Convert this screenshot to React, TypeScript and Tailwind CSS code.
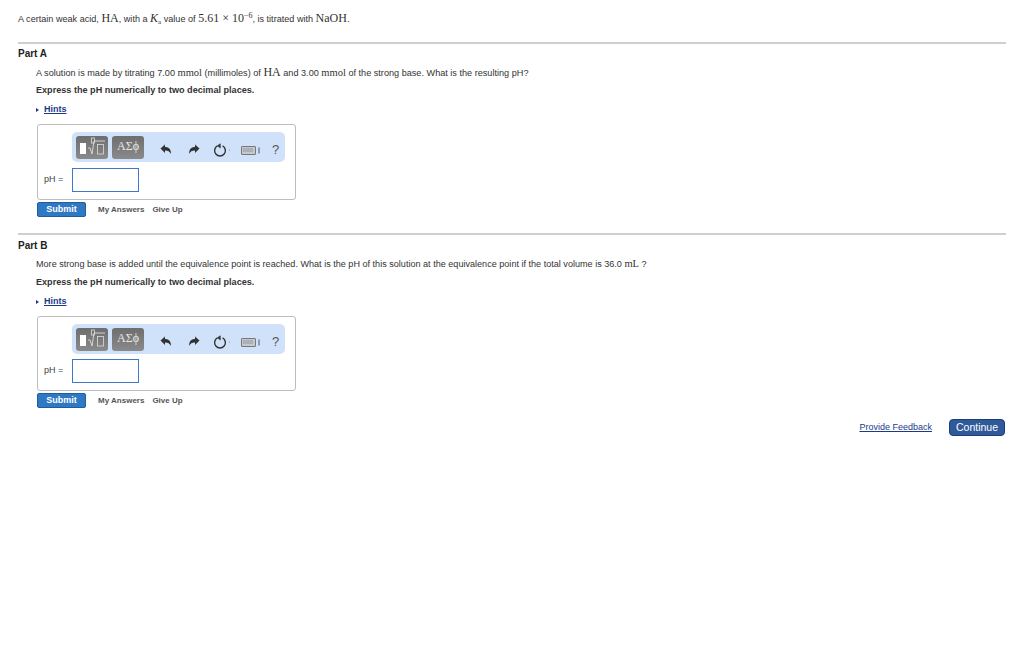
import React from "react";

const M = ({ children }: { children: React.ReactNode }) => (
  <span className="font-['Liberation_Serif',serif] text-[12px] text-[#333]">{children}</span>
);
const U = ({ children }: { children: React.ReactNode }) => (
  <span className="font-['Liberation_Serif',serif] text-[10.5px] text-[#333]">{children}</span>
);

function Toolbar() {
  return (
    <div className="ml-[34px] flex h-[30px] w-[213px] items-center rounded-[5px] bg-[#cfe2fa] pl-[4px]">
      <div className="flex h-[23px] w-[32px] items-center justify-center rounded-[3px] bg-gradient-to-b from-[#6e6e6e] to-[#8a8a8a]">
        <svg width="30" height="22" viewBox="0 0 30 22">
          <rect x="3" y="7" width="6" height="11" fill="#fff" />
          <rect x="14.5" y="2" width="3" height="5" fill="none" stroke="#ddd" strokeWidth="0.8" />
          <path d="M11 12l2 0 2 6 2-13 11 0" fill="none" stroke="#ddd" strokeWidth="0.9" />
          <rect x="20.5" y="8.5" width="6" height="9.5" fill="none" stroke="#ddd" strokeWidth="0.8" />
        </svg>
      </div>
      <div className="ml-[4px] flex h-[23px] w-[32px] items-center justify-center rounded-[3px] bg-gradient-to-b from-[#6e6e6e] to-[#8a8a8a] pb-[3px] font-['Liberation_Serif',serif] text-[12px] leading-none text-[#e8e8e8]">
        AΣϕ
      </div>
      <svg className="mt-[5px] ml-[16px]" width="12" height="11" viewBox="0 0 12 11">
        <path d="M0.5 4.5L5 0.5v2.6c4 0 6 2.6 6 7-1.2-2.6-3-3.6-6-3.6v2.5z" fill="#333" />
      </svg>
      <svg className="mt-[5px] ml-[16px]" width="12" height="11" viewBox="0 0 12 11">
        <path d="M11.5 4.5L7 0.5v2.6c-4 0-6 2.6-6 7 1.2-2.6 3-3.6 6-3.6v2.5z" fill="#333" />
      </svg>
      <svg className="mt-[5px] ml-[13px]" width="14" height="14" viewBox="0 0 14 14">
        <path d="M4.4 2.8A5.4 5.4 0 1 0 9.6 2.8" fill="none" stroke="#333" strokeWidth="1.4" />
        <path d="M7.6 0.2v5.2L4 2.8z" fill="#333" />
      </svg>
      <div className="mt-[5px] ml-[2px] h-[2px] w-px bg-[#aebccc]" />
      <svg className="mt-[7px] ml-[11px]" width="19" height="9" viewBox="0 0 19 9">
        <rect x="0.5" y="0.5" width="14" height="8" rx="0.5" fill="#c4c8d0" stroke="#777" />
        <path d="M2.5 3h10M2.5 5h10" stroke="#666" strokeWidth="1" strokeDasharray="1 1" />
        <path d="M18 1.5v6" stroke="#555" strokeWidth="1" />
      </svg>
      <span className="mt-[4px] ml-[12px] font-['Liberation_Sans',sans-serif] text-[13px] leading-none text-[#555]">?</span>
    </div>
  );
}

function Answer({ boxH, inputGap }: { boxH: string; inputGap: string }) {
  return (
    <>
      <div className={`mt-[9px] ml-[19px] ${boxH} w-[259px] rounded-[3px] border border-[#bdbdbd] pt-[7px]`}>
        <Toolbar />
        <div className={`${inputGap} flex items-center`}>
          <span className="ml-[6px] w-[28px] pb-[2px] text-[9px] text-[#444]">pH =</span>
          <div className="h-[24px] w-[67px] border border-[#3f78c9] bg-white" />
        </div>
      </div>
      <div className="mt-[2px] ml-[19px] flex items-center">
        <div className="flex h-[15px] w-[49px] items-center justify-center rounded-[2px] border border-[#1f5d9e] bg-[#2f78c4] text-[9px] font-bold text-white">
          Submit
        </div>
        <span className="ml-[12px] text-[8px] font-bold text-[#555]">My Answers</span>
        <span className="ml-[8px] text-[8px] font-bold text-[#555]">Give Up</span>
      </div>
    </>
  );
}

function Hints() {
  return (
    <div className="mt-[7px] ml-[18px] flex h-[11px] items-center">
      <span className="mr-[5px] h-0 w-0 border-y-[2.5px] border-l-[3px] border-y-transparent border-l-[#1b3a7a]" />
      <span className="text-[9px] font-bold text-[#1b3a8a] underline">Hints</span>
    </div>
  );
}

export default function App() {
  return (
    <div className="min-h-[654px] bg-white px-[18px] pt-[12px] font-['Liberation_Sans',sans-serif] text-[9px] leading-[13px] text-[#333]">
      <div className="h-[14px] whitespace-nowrap text-[9.1px]">
        A certain weak acid, <M>HA</M>, with a <M><i>K</i><sub className="text-[7px]">a</sub></M> value of <M>5.61 × 10<sup className="text-[8px]">−6</sup></M>, is titrated with <M>NaOH</M>.
      </div>

      <div className="mt-[16px] h-[2px] bg-[#cfcfcf]" />
      <div className="mt-[3px] text-[10px] font-bold leading-[14px] text-[#222]">Part A</div>
      <div className="mt-[5px] ml-[18px] h-[13px] whitespace-nowrap text-[9.14px]">
        A solution is made by titrating 7.00 <U>mmol</U> (millimoles) of <M>HA</M> and 3.00 <U>mmol</U> of the strong base. What is the resulting pH?
      </div>
      <div className="mt-[5px] ml-[18px] text-[9.1px] font-bold text-[#333]">Express the pH numerically to two decimal places.</div>
      <Hints />
      <Answer boxH="h-[76px]" inputGap="mt-[6px]" />

      <div className="mt-[16px] h-[2px] bg-[#cfcfcf]" />
      <div className="mt-[4px] text-[10px] font-bold leading-[14px] text-[#222]">Part B</div>
      <div className="mt-[4px] ml-[18px] h-[13px] whitespace-nowrap text-[9.08px]">
        More strong base is added until the equivalence point is reached. What is the pH of this solution at the equivalence point if the total volume is 36.0 <U>mL</U> ?
      </div>
      <div className="mt-[6px] ml-[18px] text-[9.1px] font-bold text-[#333]">Express the pH numerically to two decimal places.</div>
      <Hints />
      <Answer boxH="h-[75px]" inputGap="mt-[5px]" />

      <div className="mt-[11px] mr-[1px] flex items-center justify-end">
        <span className="text-[9px] text-[#1b3a8a] underline">Provide Feedback</span>
        <div className="ml-[17px] flex h-[17px] w-[56px] items-center justify-center rounded-[4px] border border-[#1d3f78] bg-[#2f5a9a] text-[10.5px] text-white">
          Continue
        </div>
      </div>
    </div>
  );
}
